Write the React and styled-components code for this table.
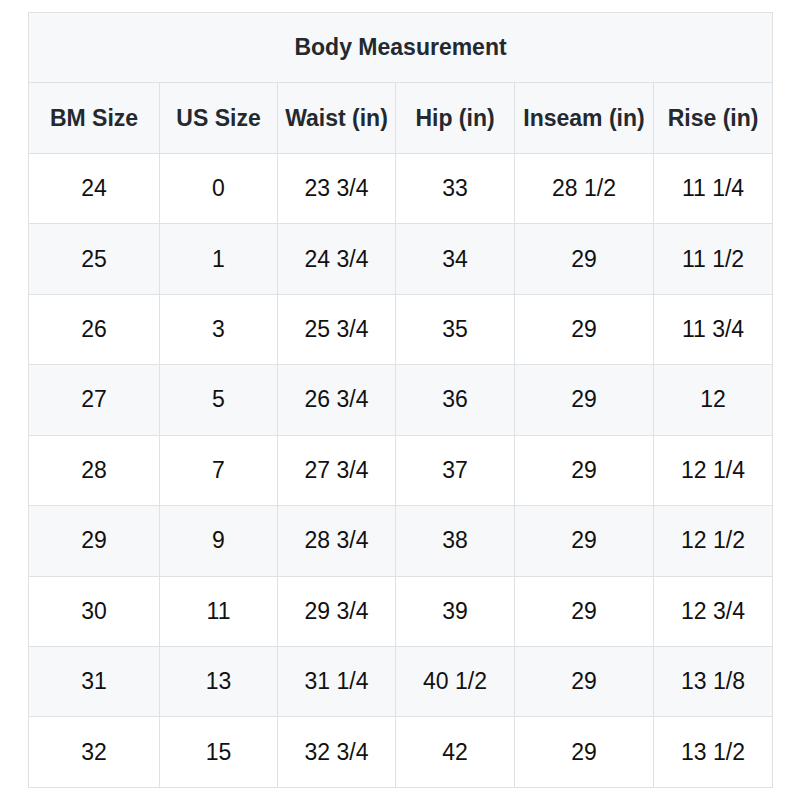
import styled, { createGlobalStyle } from "styled-components";

const GlobalStyle = createGlobalStyle`
  body {
    margin: 0;
    background: #ffffff;
    font-family: "Liberation Sans", Arial, Helvetica, sans-serif;
  }
`;

const columns = [
  { label: "BM Size", width: 131 },
  { label: "US Size", width: 118 },
  { label: "Waist (in)", width: 118 },
  { label: "Hip (in)", width: 119 },
  { label: "Inseam (in)", width: 139 },
  { label: "Rise (in)", width: 119 },
];

const rows = [
  ["24", "0", "23 3/4", "33", "28 1/2", "11 1/4"],
  ["25", "1", "24 3/4", "34", "29", "11 1/2"],
  ["26", "3", "25 3/4", "35", "29", "11 3/4"],
  ["27", "5", "26 3/4", "36", "29", "12"],
  ["28", "7", "27 3/4", "37", "29", "12 1/4"],
  ["29", "9", "28 3/4", "38", "29", "12 1/2"],
  ["30", "11", "29 3/4", "39", "29", "12 3/4"],
  ["31", "13", "31 1/4", "40 1/2", "29", "13 1/8"],
  ["32", "15", "32 3/4", "42", "29", "13 1/2"],
];

export default function App() {
  return (
    <Page>
      <GlobalStyle />
      <Table>
        <colgroup>
          {columns.map((col) => (
            <col key={col.label} style={{ width: col.width }} />
          ))}
        </colgroup>
        <thead>
          <Row $shaded>
            <HeadCell colSpan={columns.length}>Body Measurement</HeadCell>
          </Row>
          <Row $shaded>
            {columns.map((col) => (
              <HeadCell key={col.label}>{col.label}</HeadCell>
            ))}
          </Row>
        </thead>
        <tbody>
          {rows.map((row, i) => (
            <Row key={row[0]} $shaded={i % 2 === 1}>
              {row.map((value, j) => (
                <Cell key={j}>{value}</Cell>
              ))}
            </Row>
          ))}
        </tbody>
      </Table>
    </Page>
  );
}

const Page = styled.div`
  padding: 12px 28px;
`;

const Table = styled.table`
  width: 744px;
  border-collapse: collapse;
  table-layout: fixed;
`;

const Row = styled.tr`
  height: 70.45px;
  background-color: ${(props) => (props.$shaded ? "#f6f8fa" : "#ffffff")};
`;

const HeadCell = styled.th`
  border: 1px solid #dfe2e5;
  padding: 0;
  font-size: 23px;
  font-weight: 700;
  text-align: center;
  color: #24292f;
`;

const Cell = styled.td`
  border: 1px solid #dfe2e5;
  padding: 0;
  font-size: 23px;
  text-align: center;
  color: #111111;
`;
